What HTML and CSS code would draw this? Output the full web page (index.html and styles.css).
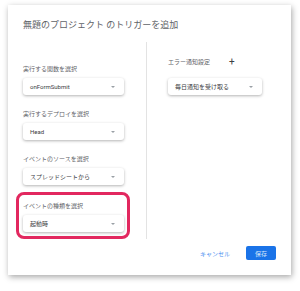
FILE: index.html
```html
<!DOCTYPE html>
<html lang="ja">
<head>
  <meta charset="UTF-8">
  <meta name="viewport" content="width=device-width, initial-scale=1.0">
  <title>トリガーを追加</title>
  <link rel="stylesheet" href="styles.css">
</head>
<body>
  <div class="dialog">
    <h2 class="dialog-title">無題のプロジェクト のトリガーを追加</h2>

    <div class="dialog-body">
      <div class="col-left">
        <div class="field">
          <label>実行する関数を選択</label>
          <div class="select"><span>onFormSubmit</span><i class="arrow"></i></div>
        </div>
        <div class="field">
          <label>実行するデプロイを選択</label>
          <div class="select"><span>Head</span><i class="arrow"></i></div>
        </div>
        <div class="field">
          <label>イベントのソースを選択</label>
          <div class="select"><span>スプレッドシートから</span><i class="arrow"></i></div>
        </div>
        <div class="field highlight">
          <label>イベントの種類を選択</label>
          <div class="select"><span>起動時</span><i class="arrow"></i></div>
        </div>
      </div>

      <div class="col-right">
        <div class="notify-head">
          <label>エラー通知設定</label>
          <span class="plus">+</span>
        </div>
        <div class="select wide"><span>毎日通知を受け取る</span><i class="arrow"></i></div>
      </div>
    </div>

    <div class="dialog-footer">
      <button class="btn-cancel">キャンセル</button>
      <button class="btn-save">保存</button>
    </div>
  </div>
</body>
</html>
```

FILE: styles.css
```css
body {
  margin: 0;
  padding: 5px 9px 12px 8px;
  background: #fff;
  font-family: Roboto, "Noto Sans CJK JP", sans-serif;
  color: #3c4043;
}
.dialog {
  width: 283px;
  box-sizing: border-box;
  padding: 14px 15px 15px 15px;
  background: #fff;
  box-shadow: 1px 2px 6px rgba(0, 0, 0, 0.35);
}
.dialog-title {
  margin: 0 0 11px 0;
  font-size: 9px;
  line-height: 12px;
  font-weight: normal;
  color: #5f6368;
}
.dialog-body {
  display: flex;
}
.col-left {
  width: 101px;
  padding-top: 23px;
}
.field {
  margin-bottom: 15px;
}
.field label,
.notify-head label {
  display: block;
  font-size: 6px;
  line-height: 8px;
  color: #5f6368;
  margin-bottom: 5px;
}
.select {
  display: flex;
  align-items: center;
  justify-content: space-between;
  height: 17px;
  padding: 0 9px 0 7px;
  box-sizing: border-box;
  background: #fff;
  border-radius: 3px;
  box-shadow: 0 1px 3px rgba(0, 0, 0, 0.3);
  font-size: 6px;
  color: #3c4043;
}
.arrow {
  width: 0;
  height: 0;
  border-left: 2px solid transparent;
  border-right: 2px solid transparent;
  border-top: 2px solid #9aa0a6;
}
.highlight {
  margin: -8px -6px 0 -7px;
  padding: 7px 3px 4px 4px;
  border: 3px solid #e2285f;
  border-radius: 8px;
}
.col-right {
  margin-left: 22px;
  padding: 16px 0 0 21px;
  border-left: 1px solid #e3e3e3;
}
.notify-head {
  display: flex;
  align-items: center;
  height: 8px;
  margin-bottom: 12px;
}
.notify-head label {
  margin-bottom: 0;
}
.plus {
  margin-left: 19px;
  font-size: 10px;
  line-height: 8px;
  color: #3c4043;
}
.select.wide {
  width: 94px;
}
.dialog-footer {
  display: flex;
  justify-content: flex-end;
  align-items: center;
  gap: 16px;
  margin-top: 7px;
}
button {
  font-family: Roboto, "Noto Sans CJK JP", sans-serif;
  font-size: 6px;
  border: none;
  cursor: pointer;
  padding: 0;
}
.btn-cancel {
  background: none;
  color: #4a8ef0;
}
.btn-save {
  width: 30px;
  height: 14px;
  background: #1a73e8;
  color: #d6e6fb;
  border-radius: 2px;
}
```
